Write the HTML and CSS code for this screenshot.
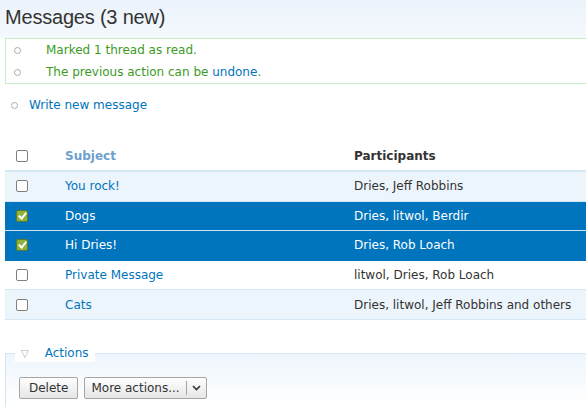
FILE: index.html
```html
<!DOCTYPE html>
<html>
<head>
<meta charset="utf-8">
<link rel="stylesheet" href="styles.css">
</head>
<body>
<div class="page-head">
  <h1 class="title">Messages (3 new)</h1>
</div>
<div class="messages">
  <ul class="msg-list">
    <li><span class="bullet"></span><span class="msg-text">Marked 1 thread as read.</span></li>
    <li><span class="bullet"></span><span class="msg-text">The previous action can be <a class="link" href="#">undone</a>.</span></li>
  </ul>
</div>
<ul class="action-links">
  <li><span class="bullet"></span><a class="link" href="#">Write new message</a></li>
</ul>
<div class="grid">
  <div class="row head">
    <div class="c-check"><span class="cb"></span></div>
    <div class="c-subj"><a class="sort" href="#">Subject</a></div>
    <div class="c-part">Participants</div>
  </div>
  <div class="row odd">
    <div class="c-check"><span class="cb"></span></div>
    <div class="c-subj"><a class="link" href="#">You rock!</a></div>
    <div class="c-part">Dries, Jeff Robbins</div>
  </div>
  <div class="row selected">
    <div class="c-check"><span class="cb checked"></span></div>
    <div class="c-subj">Dogs</div>
    <div class="c-part">Dries, litwol, Berdir</div>
  </div>
  <div class="row selected">
    <div class="c-check"><span class="cb checked"></span></div>
    <div class="c-subj">Hi Dries!</div>
    <div class="c-part">Dries, Rob Loach</div>
  </div>
  <div class="row even">
    <div class="c-check"><span class="cb"></span></div>
    <div class="c-subj"><a class="link" href="#">Private Message</a></div>
    <div class="c-part">litwol, Dries, Rob Loach</div>
  </div>
  <div class="row odd">
    <div class="c-check"><span class="cb"></span></div>
    <div class="c-subj"><a class="link" href="#">Cats</a></div>
    <div class="c-part">Dries, litwol, Jeff Robbins and others</div>
  </div>
</div>
<div class="fieldset">
  <div class="legend"><span class="tri">▽</span><span class="legend-text">Actions</span></div>
  <div class="buttons">
    <button class="btn">Delete</button>
    <div class="btn select"><span class="sel-text">More actions...</span><span class="sel-arrow"><svg width="9" height="6" viewBox="0 0 9 6"><path d="M1 1 L4.5 4.5 L8 1" fill="none" stroke="#333" stroke-width="1.6"/></svg></span></div>
  </div>
</div>
</body>
</html>
```
FILE: styles.css
```css
html, body {
  margin: 0;
  padding: 0;
  overflow: hidden;
  background: #fff;
}
body {
  font-family: "DejaVu Sans", sans-serif;
  font-size: 12px;
  color: #333;
  width: 586px;
}
a { text-decoration: none; }
.link { color: #0074bd; }

.page-head {
  height: 38px;
  background: linear-gradient(#ebf2fa, #f4f9fd);
  padding: 0 5px;
  box-sizing: border-box;
}
.title {
  margin: 0;
  font-family: "Liberation Sans", Arial, sans-serif;
  font-weight: normal;
  font-size: 20px;
  line-height: 34px;
  color: #333;
  letter-spacing: -0.2px;
}

.messages {
  margin-left: 5px;
  margin-right: -20px;
  border: 1px solid #c6efc6;
  background: #fff;
}
.msg-list {
  list-style: none;
  margin: 0;
  padding: 0;
}
.msg-list li {
  display: flex;
  align-items: center;
  height: 22px;
  color: #3b9b1f;
}
.bullet {
  display: inline-block;
  width: 5px;
  height: 5px;
  border: 1px solid #aaa;
  border-radius: 50%;
  box-sizing: content-box;
}
.msg-list .bullet { margin-left: 8px; margin-right: 25px; }

.action-links {
  list-style: none;
  margin: 0;
  padding: 10px 0 0 0;
}
.action-links li {
  display: flex;
  align-items: center;
  height: 22px;
}
.action-links .bullet { margin-left: 11px; margin-right: 11px; }

.grid {
  margin-top: 25px;
  margin-left: 5px;
}
.row {
  display: grid;
  grid-template-columns: 60px 289px 1fr;
  align-items: center;
  height: 28.6px;
  border-bottom: 1px solid #d3e7f4;
  white-space: nowrap;
}
.row.head {
  height: 29px;
  border-bottom: 2px solid #d3e7f4;
  font-weight: bold;
}
.sort { color: #6d9fd0; }
.row.odd { background: #edf5fc; }
.row.even { background: #fff; }
.row.selected {
  background: #0074bd;
  color: #fff;
  border-bottom-color: #cfe3f3;
}
.row.selected:nth-child(4) { border-bottom-color: #0074bd; }
.c-check { padding-left: 11px; display: flex; align-items: center; }
.cb {
  display: inline-block;
  width: 10px;
  height: 10px;
  border: 1px solid #7f7f7f;
  border-radius: 2px;
  background: #fff;
  position: relative;
}
.cb.checked {
  background: #8cb43c;
  border-color: #5d7a2c;
}
.cb.checked::after {
  content: "";
  position: absolute;
  left: 3px;
  top: 0px;
  width: 3px;
  height: 6px;
  border-right: 2px solid #fff;
  border-bottom: 2px solid #fff;
  transform: rotate(40deg);
}

.fieldset {
  margin-top: 33px;
  margin-left: 5px;
  margin-right: -20px;
  border-top: 1px solid #d3e7f4;
  border-left: 1px solid #d3e7f4;
  background: linear-gradient(#edf5fc, #fff 50px);
  height: 60px;
  position: relative;
}
.legend {
  position: absolute;
  left: 9px;
  top: -9px;
  height: 17px;
  background: #fff;
  padding: 0 6px 0 6px;
  display: flex;
  align-items: center;
}
.tri {
  color: #aaa;
  font-size: 10px;
  margin-right: 16px;
}
.legend-text { color: #0074bd; }
.buttons {
  display: flex;
  gap: 6px;
  padding: 23px 0 0 13px;
}
.btn {
  font-family: "DejaVu Sans", sans-serif;
  font-size: 12px;
  color: #333;
  height: 22px;
  box-sizing: border-box;
  border: 1px solid #a6a6a6;
  border-radius: 2px;
  background: linear-gradient(#fefefe, #e6e6e6);
  padding: 0 9px;
  margin: 0;
  display: flex;
  align-items: center;
}
.select { padding: 0; }
.sel-text { padding: 0 6px 0 6px; }
.sel-arrow {
  border-left: 1px solid #a6a6a6;
  height: 14px;
  width: 19px;
  display: flex;
  align-items: center;
  justify-content: center;
}
```
